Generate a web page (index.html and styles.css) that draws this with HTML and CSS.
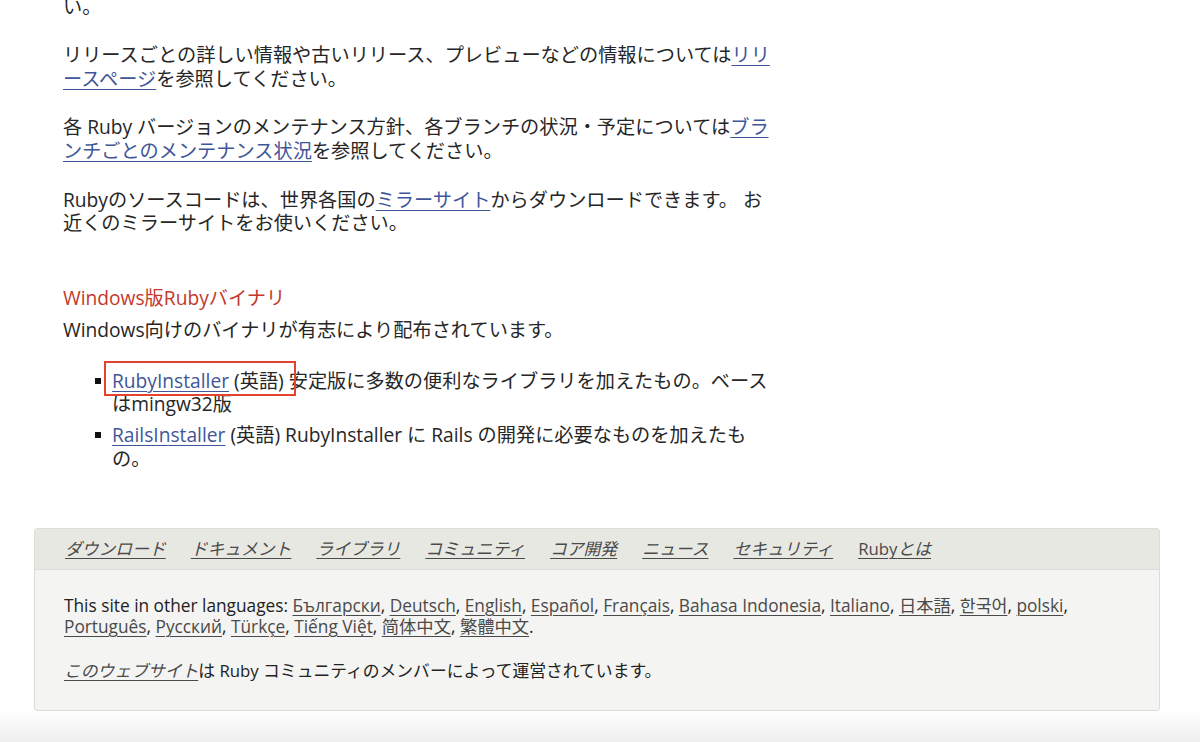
FILE: index.html
```html
<!DOCTYPE html>
<html lang="ja">
<head>
<meta charset="utf-8">
<title>ダウンロード</title>
<link rel="stylesheet" href="styles.css">
</head>
<body>
<div class="page">
  <main class="content">
    <p class="cut">最新版のソースコードと各バージョンのパッケージは以下からダウンロードしてくださ<br>い。</p>
    <p>リリースごとの詳しい情報や古いリリース、プレビューなどの情報については<a href="#">リリースページ</a>を参照してください。</p>
    <p>各 Ruby バージョンのメンテナンス方針、各ブランチの状況・予定については<a href="#">ブランチごとのメンテナンス状況</a>を参照してください。</p>
    <p>Rubyのソースコードは、世界各国の<a href="#">ミラーサイト</a>からダウンロードできます。 お近くのミラーサイトをお使いください。</p>
    <h3 class="sub">Windows版Rubyバイナリ</h3>
    <p class="lead">Windows向けのバイナリが有志により配布されています。</p>
    <ul class="bins">
      <li><span class="mark"><a href="#">RubyInstaller</a> (英語)</span> 安定版に多数の便利なライブラリを加えたもの。ベースはmingw32版</li>
      <li><a href="#">RailsInstaller</a> (英語) RubyInstaller に Rails の開発に必要なものを加えたもの。</li>
    </ul>
  </main>
  <footer class="foot">
    <nav class="foot-nav">
      <a href="#"><span class="ob">ダウンロード</span></a>
      <a href="#"><span class="ob">ドキュメント</span></a>
      <a href="#"><span class="ob">ライブラリ</span></a>
      <a href="#"><span class="ob">コミュニティ</span></a>
      <a href="#"><span class="ob">コア開発</span></a>
      <a href="#"><span class="ob">ニュース</span></a>
      <a href="#"><span class="ob">セキュリティ</span></a>
      <a href="#">Ruby<span class="ob">とは</span></a>
    </nav>
    <div class="foot-body">
      <p class="langs">This site in other languages: <a href="#">Български</a>, <a href="#">Deutsch</a>, <a href="#">English</a>, <a href="#">Español</a>, <a href="#">Français</a>, <a href="#">Bahasa Indonesia</a>, <a href="#">Italiano</a>, <a href="#">日本語</a>, <a href="#">한국어</a>, <a href="#">polski</a>, <a href="#">Português</a>, <a href="#">Русский</a>, <a href="#">Türkçe</a>, <a href="#">Tiếng Việt</a>, <a href="#">简体中文</a>, <a href="#">繁體中文</a>.</p>
      <p class="credit"><a href="#"><span class="ob">このウェブサイト</span></a>は Ruby コミュニティのメンバーによって運営されています。</p>
    </div>
  </footer>
  <div class="page-end"></div>
</div>
</body>
</html>
```

FILE: styles.css
```css
html, body {
  margin: 0;
  padding: 0;
  background: #fff;
}
body {
  font-family: "Open Sans", "Noto Sans CJK JP", sans-serif;
  color: #262626;
  overflow: hidden;
}
.page {
  display: flex;
  flex-direction: column;
}
.content {
  width: 712px;
  margin: -52px 0 0 63px;
  font-size: 19.2px;
  line-height: 23.3px;
}
.content p {
  margin: 0 0 25.5px;
}
.content a {
  color: #3f5699;
  text-decoration: underline;
  text-underline-offset: 3px;
  text-decoration-thickness: 1px;
}
.sub {
  margin: 52px 0 9px;
  font-size: 19.2px;
  font-weight: normal;
  line-height: 23.3px;
  color: #c4372b;
}
.content p.lead {
  margin-bottom: 27px;
}
.bins {
  margin: 0;
  padding: 0 0 0 49px;
  list-style: none;
}
.bins li {
  position: relative;
  margin-bottom: 8px;
}
.bins li::before {
  content: "";
  position: absolute;
  left: -17px;
  top: 9px;
  width: 6px;
  height: 6px;
  background: #111;
}
.mark {
  position: relative;
}
.mark::after {
  content: "";
  position: absolute;
  left: -8px;
  right: -12px;
  top: -6px;
  bottom: -2px;
  border: 2px solid #e3432f;
  pointer-events: none;
}
.foot {
  width: 1124px;
  margin: 50px 0 0 34px;
  border: 1px solid #dcdcd8;
  border-radius: 3px;
  background: #f4f4f2;
  font-size: 17.3px;
  line-height: 21px;
  color: #222;
}
.foot a {
  color: #4a4a4a;
  text-decoration: underline;
  text-underline-offset: 3px;
  text-decoration-thickness: 1px;
}
.ob {
  font-style: oblique;
}
.foot-nav {
  display: flex;
  gap: 25px;
  height: 40px;
  align-items: center;
  padding: 0 0 0 30px;
  background: #e8e8e3;
  border-bottom: 1px solid #dcdcd8;
  font-size: 16.8px;
}
.foot-body {
  padding: 25px 29px 29px;
}
.foot-body p {
  margin: 0;
}
.foot-body .credit {
  margin-top: 23px;
  font-size: 16.8px;
}
.page-end {
  height: 40px;
  background: linear-gradient(#ffffff, #eaeaea);
}
```
